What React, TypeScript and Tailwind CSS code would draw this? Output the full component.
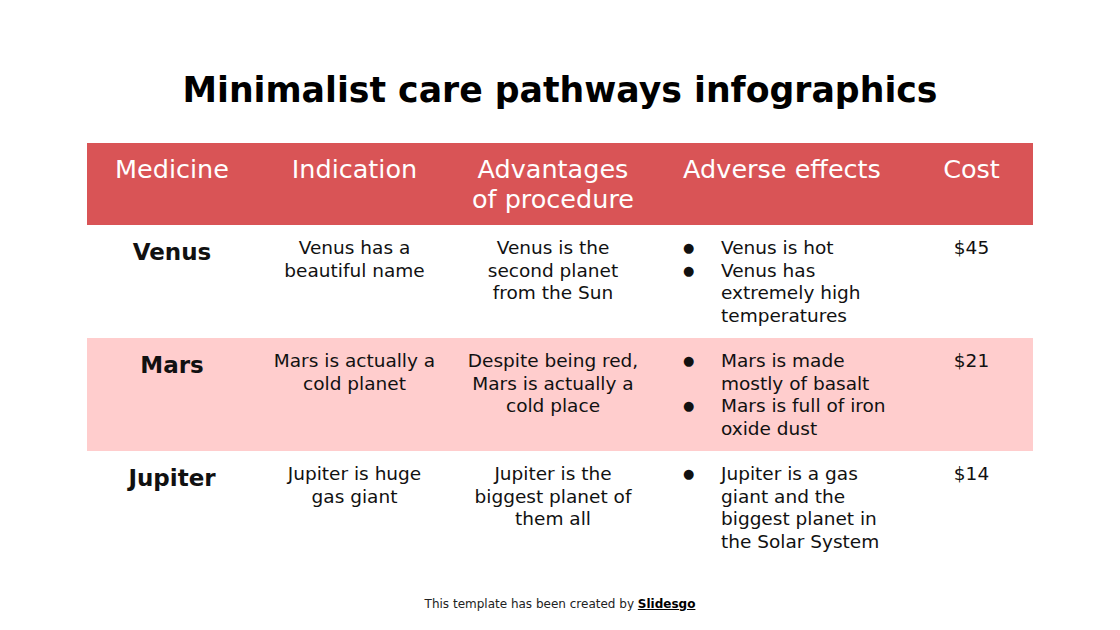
const rows = [
  {
    name: "Venus",
    indication: ["Venus has a", "beautiful name"],
    advantages: ["Venus is the", "second planet", "from the Sun"],
    effects: [["Venus is hot"], ["Venus has", "extremely high", "temperatures"]],
    cost: "$45",
    bg: "bg-white",
  },
  {
    name: "Mars",
    indication: ["Mars is actually a", "cold planet"],
    advantages: ["Despite being red,", "Mars is actually a", "cold place"],
    effects: [["Mars is made", "mostly of basalt"], ["Mars is full of iron", "oxide dust"]],
    cost: "$21",
    bg: "bg-[#ffcdcd]",
  },
  {
    name: "Jupiter",
    indication: ["Jupiter is huge", "gas giant"],
    advantages: ["Jupiter is the", "biggest planet of", "them all"],
    effects: [["Jupiter is a gas", "giant and the", "biggest planet in", "the Solar System"]],
    cost: "$14",
    bg: "bg-white",
  },
];

function Lines({ lines }: { lines: string[] }) {
  return (
    <>
      {lines.map((l) => (
        <div key={l}>{l}</div>
      ))}
    </>
  );
}

export default function App() {
  return (
    <div
      className="flex h-[630px] w-[1120px] flex-col items-center bg-white text-[#111]"
      style={{ fontFamily: "'DejaVu Sans', sans-serif" }}
    >
      <h1 className="mt-[66px] text-[34.7px] font-bold leading-[48px] text-black">
        Minimalist care pathways infographics
      </h1>

      <div className="mt-[29px] w-[946px]">
        <div className="grid h-[82px] grid-cols-[170px_195px_202px_256px_123px] bg-[#d95456] pt-[11px] text-[25.5px] leading-[30px] text-white">
          <div className="text-center">Medicine</div>
          <div className="text-center">Indication</div>
          <div className="text-center">
            <div>Advantages</div>
            <div>of procedure</div>
          </div>
          <div className="text-center">Adverse effects</div>
          <div className="text-center">Cost</div>
        </div>

        {rows.map((r) => (
          <div
            key={r.name}
            className={`grid h-[113px] grid-cols-[170px_195px_202px_256px_123px] pt-[12px] text-[18.5px] leading-[22.5px] ${r.bg}`}
          >
            <div className="-mt-[1px] text-center text-[23px] font-bold leading-[33px]">{r.name}</div>
            <div className="text-center">
              <Lines lines={r.indication} />
            </div>
            <div className="text-center">
              <Lines lines={r.advantages} />
            </div>
            <div className="pl-[29px]">
              {r.effects.map((e) => (
                <div key={e[0]} className="flex">
                  <span className="w-[38px] shrink-0 text-[13px]">●</span>
                  <div>
                    <Lines lines={e} />
                  </div>
                </div>
              ))}
            </div>
            <div className="text-center">{r.cost}</div>
          </div>
        ))}
      </div>

      <p className="mt-[31px] text-[12px] text-[#222]">
        This template has been created by{" "}
        <span className="font-bold text-black underline">Slidesgo</span>
      </p>
    </div>
  );
}
